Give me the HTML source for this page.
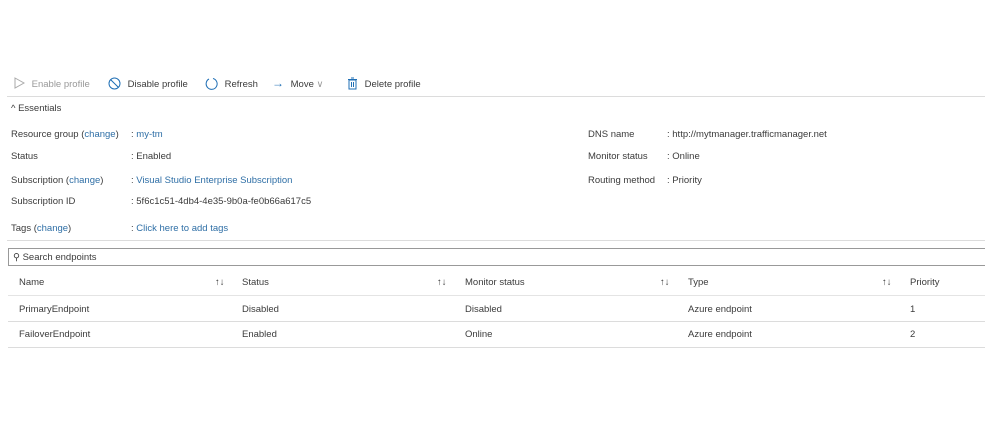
<!DOCTYPE html>
<html><head><style>
body{margin:0;width:985px;height:443px;background:#fff;font-family:"Liberation Sans",sans-serif;font-size:9.5px;color:#3b3b3b;position:relative;overflow:hidden}
.a{position:absolute;white-space:nowrap;line-height:12px;margin-top:1px}
.a svg{margin-right:4px}
.l{color:#2f6fa6}
.g{color:#999}
.hr{position:absolute;height:1px;background:#dcdcdc}
</style></head><body>
<div class="a g" style="left:13px;top:76px"><svg width="12" height="12" style="vertical-align:-2px"><path d="M2 1L11 6L2 11Z" fill="none" stroke="#aaa"/></svg> Enable profile</div>
<div class="a" style="left:108px;top:76px"><svg width="13" height="13" style="vertical-align:-3px"><circle cx="6.5" cy="6.5" r="5.5" fill="none" stroke="#1f6fb5"/><path d="M2.6 2.6L10.4 10.4" stroke="#1f6fb5"/></svg> Disable profile</div>
<div class="a" style="left:205px;top:76px"><svg width="13" height="13" style="vertical-align:-3px"><path d="M4 2A5.5 5.5 0 1 0 8 1.5" fill="none" stroke="#1f6fb5"/></svg> Refresh</div>
<div class="a" style="left:272px;top:76px"><span style="color:#1f6fb5;font-size:12px;margin-right:4px">→</span> Move <span class="g">∨</span></div>
<div class="a" style="left:347px;top:76px"><svg width="11" height="13" style="vertical-align:-3px"><rect x="2" y="3" width="7" height="9" fill="none" stroke="#1f6fb5"/><path d="M1 2.5H10M4 1H7M4.5 5V10M6.5 5V10" stroke="#1f6fb5"/></svg> Delete profile</div>
<div class="hr" style="left:7px;top:96px;width:978px"></div>
<div class="a" style="left:11px;top:102px">^ Essentials</div>
<div class="a" style="left:11px;top:128px">Resource group (<span class="l">change</span>)</div><div class="a" style="left:131px;top:128px">: <span class="l">my-tm</span></div>
<div class="a" style="left:11px;top:150px">Status</div><div class="a" style="left:131px;top:150px">: Enabled</div>
<div class="a" style="left:11px;top:174px">Subscription (<span class="l">change</span>)</div><div class="a" style="left:131px;top:174px">: <span class="l">Visual Studio Enterprise Subscription</span></div>
<div class="a" style="left:11px;top:195px">Subscription ID</div><div class="a" style="left:131px;top:195px">: 5f6c1c51-4db4-4e35-9b0a-fe0b66a617c5</div>
<div class="a" style="left:11px;top:222px">Tags (<span class="l">change</span>)</div><div class="a" style="left:131px;top:222px">: <span class="l">Click here to add tags</span></div>
<div class="a" style="left:588px;top:128px">DNS name</div><div class="a" style="left:667px;top:128px">: http://mytmanager.trafficmanager.net</div>
<div class="a" style="left:588px;top:150px">Monitor status</div><div class="a" style="left:667px;top:150px">: Online</div>
<div class="a" style="left:588px;top:174px">Routing method</div><div class="a" style="left:667px;top:174px">: Priority</div>
<div class="hr" style="left:7px;top:240px;width:978px"></div>
<div style="position:absolute;left:8px;top:248px;width:985px;height:18px;border:1px solid #999;box-sizing:border-box"></div>
<div class="a" style="left:13px;top:251px">⚲ Search endpoints</div>
<div class="a" style="left:19px;top:276px">Name</div><div class="a" style="left:215px;top:276px">↑↓</div>
<div class="a" style="left:242px;top:276px">Status</div><div class="a" style="left:437px;top:276px">↑↓</div>
<div class="a" style="left:465px;top:276px">Monitor status</div><div class="a" style="left:660px;top:276px">↑↓</div>
<div class="a" style="left:688px;top:276px">Type</div><div class="a" style="left:882px;top:276px">↑↓</div>
<div class="a" style="left:910px;top:276px">Priority</div>
<div class="hr" style="left:8px;top:295px;width:977px;background:#e4e4e4"></div>
<div class="a" style="left:19px;top:303px">PrimaryEndpoint</div><div class="a" style="left:242px;top:303px">Disabled</div><div class="a" style="left:465px;top:303px">Disabled</div><div class="a" style="left:688px;top:303px">Azure endpoint</div><div class="a" style="left:910px;top:303px">1</div>
<div class="hr" style="left:8px;top:321px;width:977px"></div>
<div class="a" style="left:19px;top:328px">FailoverEndpoint</div><div class="a" style="left:242px;top:328px">Enabled</div><div class="a" style="left:465px;top:328px">Online</div><div class="a" style="left:688px;top:328px">Azure endpoint</div><div class="a" style="left:910px;top:328px">2</div>
<div class="hr" style="left:8px;top:347px;width:977px"></div>
</body></html>
